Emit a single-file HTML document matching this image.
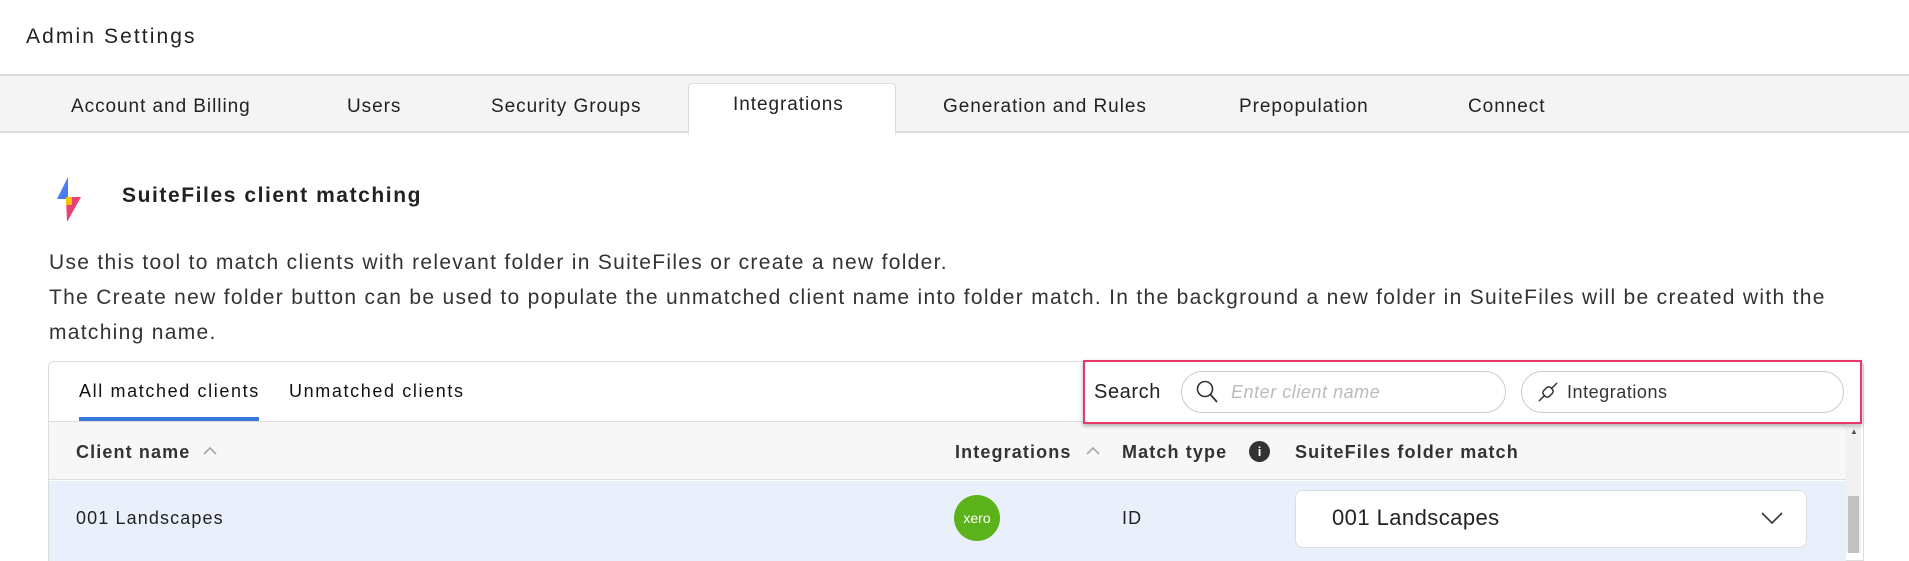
<!DOCTYPE html>
<html><head><meta charset="utf-8"><style>
*{margin:0;padding:0;box-sizing:border-box}
body{width:1909px;height:553px;overflow:hidden;background:#fff;font-family:"Liberation Sans",sans-serif;color:#333;position:relative;letter-spacing:0.07em}
.a{position:absolute;white-space:nowrap}
.tab{position:absolute;top:96px;font-size:19px;color:#222;line-height:22px;letter-spacing:0.05em}
</style></head><body>
<div class="a" style="left:26px;top:25px;font-size:21px;color:#222;letter-spacing:0.1em">Admin Settings</div>
<div class="a" style="left:0;top:74px;width:1909px;height:59px;background:#f4f4f4;border-top:2px solid #ddd;border-bottom:2px solid #ddd"></div>
<div class="a" style="left:688px;top:83px;width:208px;height:52px;background:#fff;border:1px solid #ddd;border-bottom:none;border-radius:4px 4px 0 0"></div>
<div class="tab" style="left:71px">Account and Billing</div>
<div class="tab" style="left:347px">Users</div>
<div class="tab" style="left:491px">Security Groups</div>
<div class="tab" style="left:733px;top:94px">Integrations</div>
<div class="tab" style="left:943px">Generation and Rules</div>
<div class="tab" style="left:1239px">Prepopulation</div>
<div class="tab" style="left:1468px">Connect</div>
<svg class="a" style="left:55px;top:177px" width="28" height="46" viewBox="0 0 28 46"><polygon points="13,0 13,22 2,22" fill="#4a7cf3"/><polygon points="11,20 26,20 12,45" fill="#ec3f72"/><rect x="11" y="20" width="6" height="8" fill="#f5c400"/></svg>
<div class="a" style="left:122px;top:184px;font-size:21px;font-weight:bold;color:#222;letter-spacing:0.075em">SuiteFiles client matching</div>
<div class="a" style="left:49px;top:245px;font-size:21px;line-height:35px;white-space:normal;width:1835px;letter-spacing:1.3px">Use this tool to match clients with relevant folder in SuiteFiles or create a new folder.<br>The Create new folder button can be used to populate the unmatched client name into folder match. In the background a new folder in SuiteFiles will be created with the matching name.</div>
<div class="a" style="left:48px;top:361px;width:1816px;height:200px;border:1px solid #ddd;border-radius:6px 6px 0 0"></div>
<div class="a" style="left:79px;top:381px;font-size:18px;color:#111;letter-spacing:0.09em">All matched clients</div>
<div class="a" style="left:79px;top:417px;width:180px;height:4px;background:#3a78d8"></div>
<div class="a" style="left:289px;top:381px;font-size:18px;color:#111;letter-spacing:0.09em">Unmatched clients</div>
<div class="a" style="left:49px;top:421px;width:1797px;height:59px;background:#f7f7f7;border-top:1px solid #ddd;border-bottom:1px solid #ddd"></div>
<div class="a" style="left:76px;top:442px;font-size:18px;font-weight:bold;color:#333">Client name</div>
<svg class="a" style="left:202px;top:446px" width="16" height="10"><polyline points="2,8 8,2 14,8" fill="none" stroke="#aaa" stroke-width="1.8"/></svg>
<div class="a" style="left:955px;top:442px;font-size:18px;font-weight:bold;color:#333">Integrations</div>
<svg class="a" style="left:1085px;top:446px" width="16" height="10"><polyline points="2,8 8,2 14,8" fill="none" stroke="#aaa" stroke-width="1.8"/></svg>
<div class="a" style="left:1122px;top:442px;font-size:18px;font-weight:bold;color:#333">Match type</div>
<div class="a" style="left:1249px;top:441px;width:21px;height:21px;border-radius:50%;background:#333;color:#fff;font-size:13px;font-weight:bold;text-align:center;line-height:21px;letter-spacing:0">i</div>
<div class="a" style="left:1295px;top:442px;font-size:18px;font-weight:bold;color:#333">SuiteFiles folder match</div>
<div class="a" style="left:49px;top:481px;width:1797px;height:80px;background:#eaf0fb"></div>
<div class="a" style="left:76px;top:508px;font-size:18px;color:#222">001 Landscapes</div>
<div class="a" style="left:954px;top:495px;width:46px;height:46px;border-radius:50%;background:#5cb21a;color:#fff;font-size:14px;text-align:center;line-height:46px;letter-spacing:0">xero</div>
<div class="a" style="left:1122px;top:508px;font-size:18px;color:#222">ID</div>
<div class="a" style="left:1295px;top:490px;width:512px;height:58px;background:#fff;border:1px solid #ddd;border-radius:8px"></div>
<div class="a" style="left:1332px;top:505px;font-size:22px;color:#222;letter-spacing:0.02em">001 Landscapes</div>
<svg class="a" style="left:1760px;top:510px" width="24" height="16"><polyline points="2,3 12,13 22,3" fill="none" stroke="#333" stroke-width="1.6"/></svg>
<div class="a" style="left:1846px;top:426px;width:15px;height:127px;background:#f1f1f1"></div>
<div class="a" style="left:1848px;top:496px;width:11px;height:57px;background:#c1c1c1"></div>
<div class="a" style="left:1850px;top:427px;font-size:8px;color:#555">&#9650;</div>
<div class="a" style="left:1083px;top:360px;width:779px;height:64px;border:2.5px solid #e6386a;background:#fff;box-shadow:0 2px 4px rgba(0,0,0,.3)"></div>
<div class="a" style="left:1094px;top:381px;font-size:20px;color:#222;letter-spacing:0.03em">Search</div>
<div class="a" style="left:1181px;top:371px;width:325px;height:42px;border:1px solid #ccc;border-radius:21px"></div>
<svg class="a" style="left:1195px;top:378px" width="26" height="28"><circle cx="10" cy="11" r="7.5" fill="none" stroke="#333" stroke-width="1.6"/><line x1="15.5" y1="16.5" x2="22" y2="24" stroke="#333" stroke-width="1.8"/></svg>
<div class="a" style="left:1231px;top:382px;font-size:18px;font-style:italic;color:#bbb;letter-spacing:0.03em">Enter client name</div>
<div class="a" style="left:1521px;top:371px;width:323px;height:42px;border:1px solid #ccc;border-radius:21px"></div>
<svg class="a" style="left:1536px;top:380px" width="24" height="24"><line x1="3" y1="21" x2="8" y2="16" stroke="#333" stroke-width="1.5"/><line x1="16" y1="8" x2="21" y2="3" stroke="#333" stroke-width="1.5"/><rect x="7" y="8" width="10" height="8" rx="3" transform="rotate(-45 12 12)" fill="none" stroke="#333" stroke-width="1.5"/></svg>
<div class="a" style="left:1567px;top:382px;font-size:18px;color:#333;letter-spacing:0.03em">Integrations</div>
</body></html>
